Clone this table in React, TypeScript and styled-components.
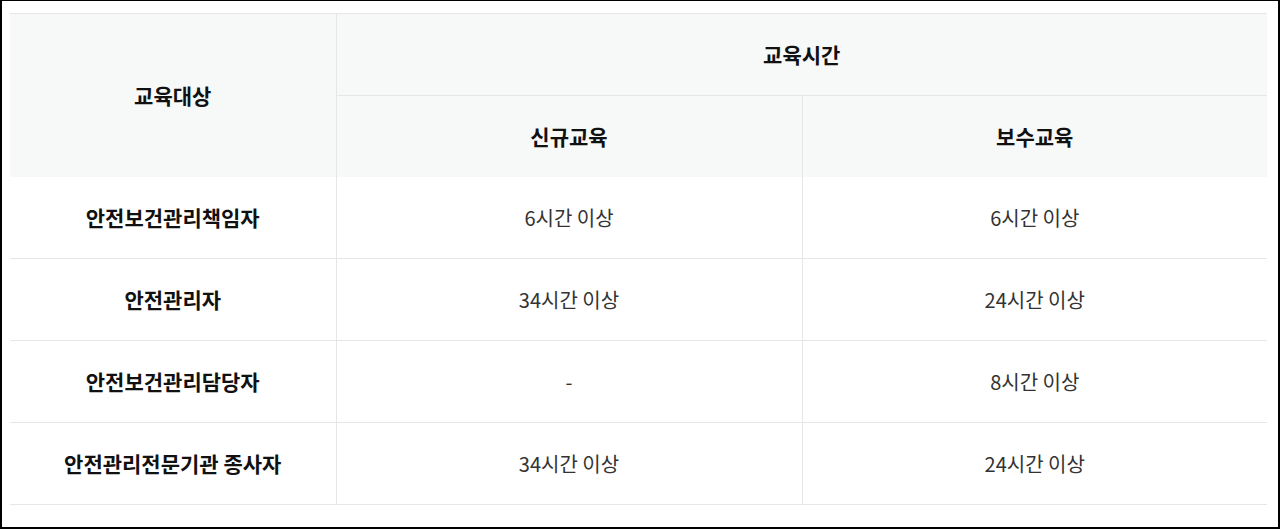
import React from 'react';
import styled, { createGlobalStyle } from 'styled-components';

const GlobalStyle = createGlobalStyle`
  html, body {
    margin: 0;
    padding: 0;
    background: #fff;
  }
  body {
    font-family: 'Noto Sans CJK KR', 'Noto Sans', sans-serif;
  }
`;

const Frame = styled.div`
  box-sizing: border-box;
  width: 1280px;
  height: 529px;
  border: 2px solid #000;
  border-top-width: 1px;
  padding: 12px 11px 0 8px;
  background: #fff;
`;

const Table = styled.table`
  width: 1257px;
  border-collapse: collapse;
  table-layout: fixed;
  border-top: 1px solid #e6e6e6;
`;

const Th = styled.th<{ $divider?: boolean; $noBottom?: boolean }>`
  height: 81px;
  padding: 0;
  background: #f7f8f8;
  color: #111;
  font-size: 21px;
  font-weight: 700;
  line-height: 1.4;
  text-align: center;
  vertical-align: middle;
  border-left: ${(p) => (p.$divider ? '1px solid #e6e6e6' : 'none')};
  border-bottom: ${(p) => (p.$noBottom ? 'none' : '1px solid #e6e6e6')};
`;

const Td = styled.td<{ $head?: boolean }>`
  height: 81px;
  padding: 0;
  text-align: center;
  vertical-align: middle;
  line-height: 1.4;
  font-size: ${(p) => (p.$head ? '21px' : '20px')};
  font-weight: ${(p) => (p.$head ? 700 : 400)};
  color: ${(p) => (p.$head ? '#111' : '#333')};
  border-bottom: 1px solid #e6e6e6;
  border-left: ${(p) => (p.$head ? 'none' : '1px solid #e6e6e6')};
`;

const rows = [
  { target: '안전보건관리책임자', fresh: '6시간 이상', refresh: '6시간 이상' },
  { target: '안전관리자', fresh: '34시간 이상', refresh: '24시간 이상' },
  { target: '안전보건관리담당자', fresh: '-', refresh: '8시간 이상' },
  { target: '안전관리전문기관 종사자', fresh: '34시간 이상', refresh: '24시간 이상' },
];

const App = () => {
  return (
    <>
      <GlobalStyle />
      <Frame>
        <Table>
          <colgroup>
            <col style={{ width: 326 }} />
            <col style={{ width: 466 }} />
            <col style={{ width: 465 }} />
          </colgroup>
          <thead>
            <tr>
              <Th rowSpan={2} $noBottom>
                교육대상
              </Th>
              <Th colSpan={2} $divider>
                교육시간
              </Th>
            </tr>
            <tr>
              <Th $divider $noBottom>
                신규교육
              </Th>
              <Th $divider $noBottom>
                보수교육
              </Th>
            </tr>
          </thead>
          <tbody>
            {rows.map((row) => (
              <tr key={row.target}>
                <Td $head>{row.target}</Td>
                <Td>{row.fresh}</Td>
                <Td>{row.refresh}</Td>
              </tr>
            ))}
          </tbody>
        </Table>
      </Frame>
    </>
  );
};

export default App;
